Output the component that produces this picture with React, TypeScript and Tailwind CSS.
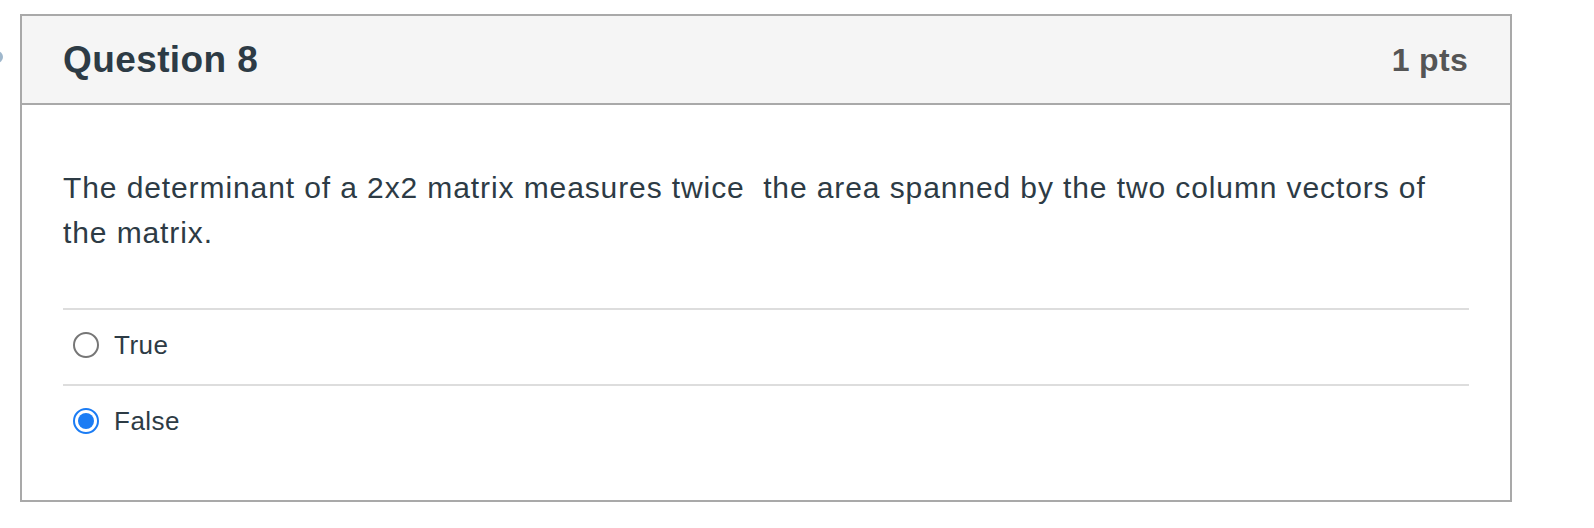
export default function App() {
  const answers = [
    { id: "a1", label: "True", checked: false },
    { id: "a2", label: "False", checked: true },
  ]

  return (
    <div className="relative min-h-[528px] bg-white pt-[14px] pl-[20px] font-['Liberation_Sans',Arial,sans-serif] text-[#2d3b45]">
      {/* cut-off marker at the page edge */}
      <span className="absolute left-[-9px] top-[51px] h-[12px] w-[12px] rounded-full bg-[#9fb7cc]" />

      <div className="w-[1492px] border-2 border-[#a9a9a9] bg-white">
        {/* Header */}
        <div className="flex h-[89px] items-center justify-between border-b-2 border-[#a9a9a9] bg-[#f5f5f5] pl-[41px] pr-[42px]">
          <h2 className="text-[37px] font-bold tracking-[0.4px] text-[#2d3b45]">Question 8</h2>
          <span className="text-[32px] font-bold tracking-[0.3px] text-[#555555]">1 pts</span>
        </div>

        {/* Body */}
        <div className="px-[41px] pt-[60px] pb-[40px]">
          <p className="text-[30px] leading-[45px] tracking-[0.9px]">
            The determinant of a 2x2 matrix measures twice&nbsp; the area spanned by the two column vectors of the matrix.
          </p>

          <div className="mt-[53px]">
            {answers.map(a => (
              <label key={a.id} className="flex items-center gap-[15px] border-t-2 border-[#dddddd] pt-[21px] pb-[25px] pl-[10px]">
                {a.checked ? (
                  <span className="flex h-[26px] w-[26px] items-center justify-center rounded-full border-[2px] border-[#1b7cf4] bg-white">
                    <span className="h-[16px] w-[16px] rounded-full bg-[#1b7cf4]" />
                  </span>
                ) : (
                  <span className="h-[26px] w-[26px] rounded-full border-[2px] border-[#767676] bg-white" />
                )}
                <span className="text-[26px] leading-[28px] tracking-[0.5px]">{a.label}</span>
              </label>
            ))}
          </div>
        </div>
      </div>
    </div>
  )
}
